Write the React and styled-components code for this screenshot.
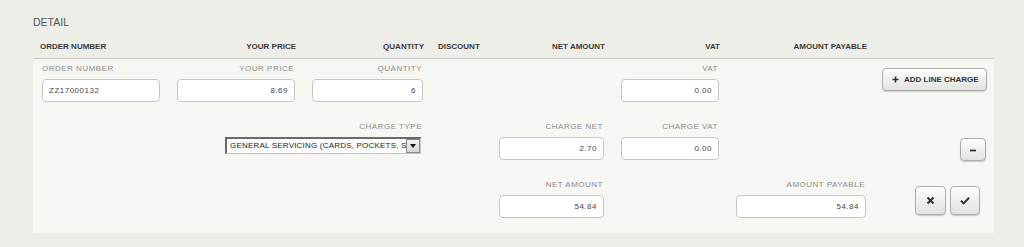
import React from "react";
import styled, { createGlobalStyle } from "styled-components";

const GlobalStyle = createGlobalStyle`
  body {
    margin: 0;
    background: #eeeee9;
    font-family: "Liberation Sans", Arial, sans-serif;
  }
`;

const COLUMNS = "135px 135px 128px 59px 122px 115px 147px 120px";

const Page = styled.div`
  padding: 16px 0 14px 33px;
`;

const Title = styled.div`
  font-size: 10.5px;
  line-height: 12px;
  color: #555;
  margin-bottom: 8px;
`;

const HeadRow = styled.div`
  display: grid;
  grid-template-columns: ${COLUMNS};
  height: 22px;
  border-bottom: 1px solid #c8c8c6;
  width: 961px;
`;

const HeadCell = styled.div`
  font-size: 8px;
  font-weight: bold;
  color: #3a3a3a;
  line-height: 22px;
  padding: 0 7px;
  text-align: ${(p) => (p.$left ? "left" : "right")};
  white-space: nowrap;
`;

const Panel = styled.div`
  width: 961px;
  background: #f6f6f3;
`;

const Row = styled.div`
  display: grid;
  grid-template-columns: ${COLUMNS};
  height: 58px;
`;

const Field = styled.div`
  grid-column: ${(p) => p.$col};
  display: flex;
  flex-direction: column;
  padding: 5px 8px 15px 9px;
`;

const Label = styled.div`
  font-size: 8px;
  line-height: 10px;
  height: 10px;
  letter-spacing: 0.5px;
  color: #8c8c8a;
  text-align: ${(p) => (p.$left ? "left" : "right")};
  margin-bottom: 5px;
  white-space: nowrap;
  padding-right: ${(p) => (p.$left ? 0 : 1)}px;
`;

const Input = styled.div`
  box-sizing: border-box;
  height: 23px;
  background: #fff;
  border: 1px solid #c6c6c4;
  border-radius: 4px;
  font-size: 8px;
  letter-spacing: 0.5px;
  color: #444;
  line-height: 21px;
  padding: 0 6px;
  text-align: ${(p) => (p.$left ? "left" : "right")};
  white-space: nowrap;
  overflow: hidden;
`;

const Select = styled.div`
  box-sizing: border-box;
  align-self: flex-end;
  width: 196px;
  height: 17px;
  margin-right: 2px;
  display: flex;
  background: #fff;
  border-style: solid;
  border-width: 2px 1px 1px 2px;
  border-color: #6a6a6a #c4c4c4 #c4c4c4 #6a6a6a;
`;

const SelectText = styled.div`
  flex: 1;
  overflow: hidden;
  white-space: nowrap;
  font-size: 8px;
  letter-spacing: 0.2px;
  line-height: 14px;
  color: #222;
  padding-left: 3px;
`;

const SelectArrow = styled.div`
  width: 14px;
  box-sizing: border-box;
  background: linear-gradient(#f2f2f2, #d6d6d6);
  border: 1px solid #8a8a8a;
  display: flex;
  align-items: center;
  justify-content: center;
`;

const ActionCell = styled.div`
  grid-column: 8;
  display: flex;
  justify-content: ${(p) => (p.$end ? "flex-end" : "flex-start")};
  align-items: flex-start;
  gap: 4px;
  padding: ${(p) => p.$top}px ${(p) => 8 + (p.$inset || 0)}px 0 8px;
`;

const Button = styled.button`
  box-sizing: border-box;
  height: ${(p) => p.$h || 23}px;
  width: ${(p) => (p.$w ? `${p.$w}px` : "auto")};
  padding: ${(p) => (p.$w ? 0 : "0 7px 0 9px")};
  display: flex;
  align-items: center;
  justify-content: center;
  gap: 5px;
  background: linear-gradient(#fdfdfc, #e2e2df);
  border: 1px solid #adadab;
  border-radius: 4px;
  box-shadow: 0 1px 1px rgba(0, 0, 0, 0.18), inset 0 1px 0 #fff;
  font-family: "Liberation Sans", Arial, sans-serif;
  font-size: 8px;
  font-weight: bold;
  color: #333;
  white-space: nowrap;
  cursor: pointer;
`;

const PlusIcon = () => (
  <svg width="7" height="7" viewBox="0 0 7 7">
    <path d="M3.5 0.5v6M0.5 3.5h6" stroke="#333" strokeWidth="1.6" />
  </svg>
);

const MinusIcon = () => (
  <svg width="8" height="8" viewBox="0 0 8 8">
    <path d="M1 4.5h6" stroke="#333" strokeWidth="1.8" />
  </svg>
);

const CrossIcon = () => (
  <svg width="9" height="9" viewBox="0 0 9 9">
    <path d="M1.5 1.5l6 6M7.5 1.5l-6 6" stroke="#333" strokeWidth="2" />
  </svg>
);

const CheckIcon = () => (
  <svg width="10" height="9" viewBox="0 0 10 9">
    <path d="M1 4.8l2.8 2.6L9 1.8" stroke="#333" strokeWidth="2" fill="none" />
  </svg>
);

const ArrowIcon = () => (
  <svg width="6" height="4" viewBox="0 0 6 4">
    <path d="M0 0h6L3 4z" fill="#111" />
  </svg>
);

const heads = [
  ["ORDER NUMBER", true],
  ["YOUR PRICE"],
  ["QUANTITY"],
  ["DISCOUNT", true],
  ["NET AMOUNT"],
  ["VAT"],
  ["AMOUNT PAYABLE"],
  [""],
];

function App() {
  return (
    <Page>
      <GlobalStyle />
      <Title>DETAIL</Title>
      <HeadRow>
        {heads.map(([text, left], i) => (
          <HeadCell key={i} $left={left}>
            {text}
          </HeadCell>
        ))}
      </HeadRow>
      <Panel>
        <Row>
          <Field $col="1">
            <Label $left>ORDER NUMBER</Label>
            <Input $left>ZZ17000132</Input>
          </Field>
          <Field $col="2">
            <Label>YOUR PRICE</Label>
            <Input>8.69</Input>
          </Field>
          <Field $col="3">
            <Label>QUANTITY</Label>
            <Input>6</Input>
          </Field>
          <Field $col="6">
            <Label>VAT</Label>
            <Input>0.00</Input>
          </Field>
          <ActionCell $top={9}>
            <Button>
              <PlusIcon />
              ADD LINE CHARGE
            </Button>
          </ActionCell>
        </Row>
        <Row>
          <Field $col="2 / span 2">
            <Label>CHARGE TYPE</Label>
            <Select>
              <SelectText>GENERAL SERVICING (CARDS, POCKETS, SLEEVES)</SelectText>
              <SelectArrow>
                <ArrowIcon />
              </SelectArrow>
            </Select>
          </Field>
          <Field $col="5">
            <Label>CHARGE NET</Label>
            <Input>2.70</Input>
          </Field>
          <Field $col="6">
            <Label>CHARGE VAT</Label>
            <Input>0.00</Input>
          </Field>
          <ActionCell $top={21} $end>
            <Button $w={26}>
              <MinusIcon />
            </Button>
          </ActionCell>
        </Row>
        <Row>
          <Field $col="5">
            <Label>NET AMOUNT</Label>
            <Input>54.84</Input>
          </Field>
          <Field $col="7">
            <Label>AMOUNT PAYABLE</Label>
            <Input>54.84</Input>
          </Field>
          <ActionCell $top={11} $end $inset={6}>
            <Button $w={31} $h={29}>
              <CrossIcon />
            </Button>
            <Button $w={30} $h={29}>
              <CheckIcon />
            </Button>
          </ActionCell>
        </Row>
      </Panel>
    </Page>
  );
}

export default App;
